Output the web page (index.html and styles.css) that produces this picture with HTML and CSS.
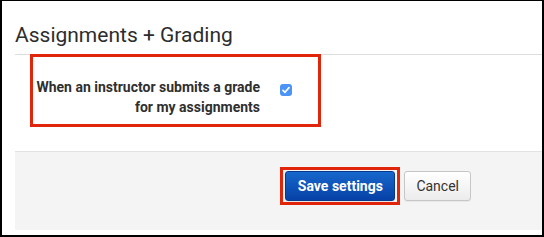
FILE: index.html
```html
<!DOCTYPE html>
<html lang="en">

<head>
    <meta charset="UTF-8">
    <meta name="viewport" content="width=device-width, initial-scale=1.0">
    <title>Notification Settings</title>
    <link rel="stylesheet" href="styles.css">
</head>

<body>
    <div class="frame">
        <h2 class="section-title">Assignments + Grading</h2>

        <!-- Highlighted preference row -->
        <div class="highlight option">
            <label class="option-label" for="gradeSubmitted">When an instructor submits a grade for my assignments</label>
            <span class="check" id="gradeSubmitted">
                <svg width="12" height="12" viewBox="0 0 12 12">
                    <path d="M3 6.3 L5 8.3 L9 3.6" fill="none" stroke="#fff" stroke-width="1.7" stroke-linecap="round" stroke-linejoin="round" />
                </svg>
            </span>
        </div>

        <div class="form-actions">
            <div class="highlight save-wrap">
                <button class="btn btn-primary">Save settings</button>
            </div>
            <button class="btn">Cancel</button>
        </div>
    </div>
</body>

</html>
```

FILE: styles.css
```css
body {
    margin: 0;
    background-color: #fff;
    font-family: Roboto, "Liberation Sans", Arial, sans-serif;
    color: #333;
}

.frame {
    width: 544px;
    height: 237px;
    box-sizing: border-box;
    border: 2px solid #000;
    border-top-width: 1px;
    overflow: hidden;
}

.section-title {
    margin: 22px 0 0 13px;
    padding-bottom: 7px;
    border-bottom: 1px solid #ddd;
    font-size: 21px;
    font-weight: 400;
    line-height: 24px;
    color: #2d2d2d;
}

/* Red annotation boxes */
.highlight {
    border: 3px solid #e0250b;
    box-sizing: border-box;
}

.option {
    display: flex;
    align-items: flex-start;
    width: 291px;
    height: 73px;
    margin: -1px 0 0 28px;
}

.option-label {
    width: 227px;
    padding-top: 20px;
    text-align: right;
    font-size: 14px;
    font-weight: 700;
    line-height: 20px;
    color: #2f2f2f;
}

.check {
    display: flex;
    align-items: center;
    justify-content: center;
    width: 12px;
    height: 12px;
    margin: 27px 0 0 20px;
    border-radius: 3px;
    background-color: #4b94f6;
}

.form-actions {
    display: flex;
    align-items: center;
    justify-content: flex-end;
    gap: 4px;
    height: 79px;
    box-sizing: border-box;
    margin: 24px 0 0 13px;
    padding: 0 71px 10px 0;
    background-color: #f4f4f4;
    border-top: 1px solid #e2e2e2;
}

.save-wrap {
    padding: 1px 2px;
}

.btn {
    display: block;
    height: 30px;
    padding: 0 11px;
    font-family: inherit;
    font-size: 14px;
    color: #333;
    background: linear-gradient(#fff, #ececec);
    border: 1px solid #c6c6c6;
    border-radius: 3px;
    box-shadow: 0 1px 0 rgba(0, 0, 0, 0.05);
}

.btn-primary {
    width: 110px;
    font-weight: 700;
    color: #fff;
    background: linear-gradient(#1767cc, #0641a6);
    border-color: #06398c;
}
```
